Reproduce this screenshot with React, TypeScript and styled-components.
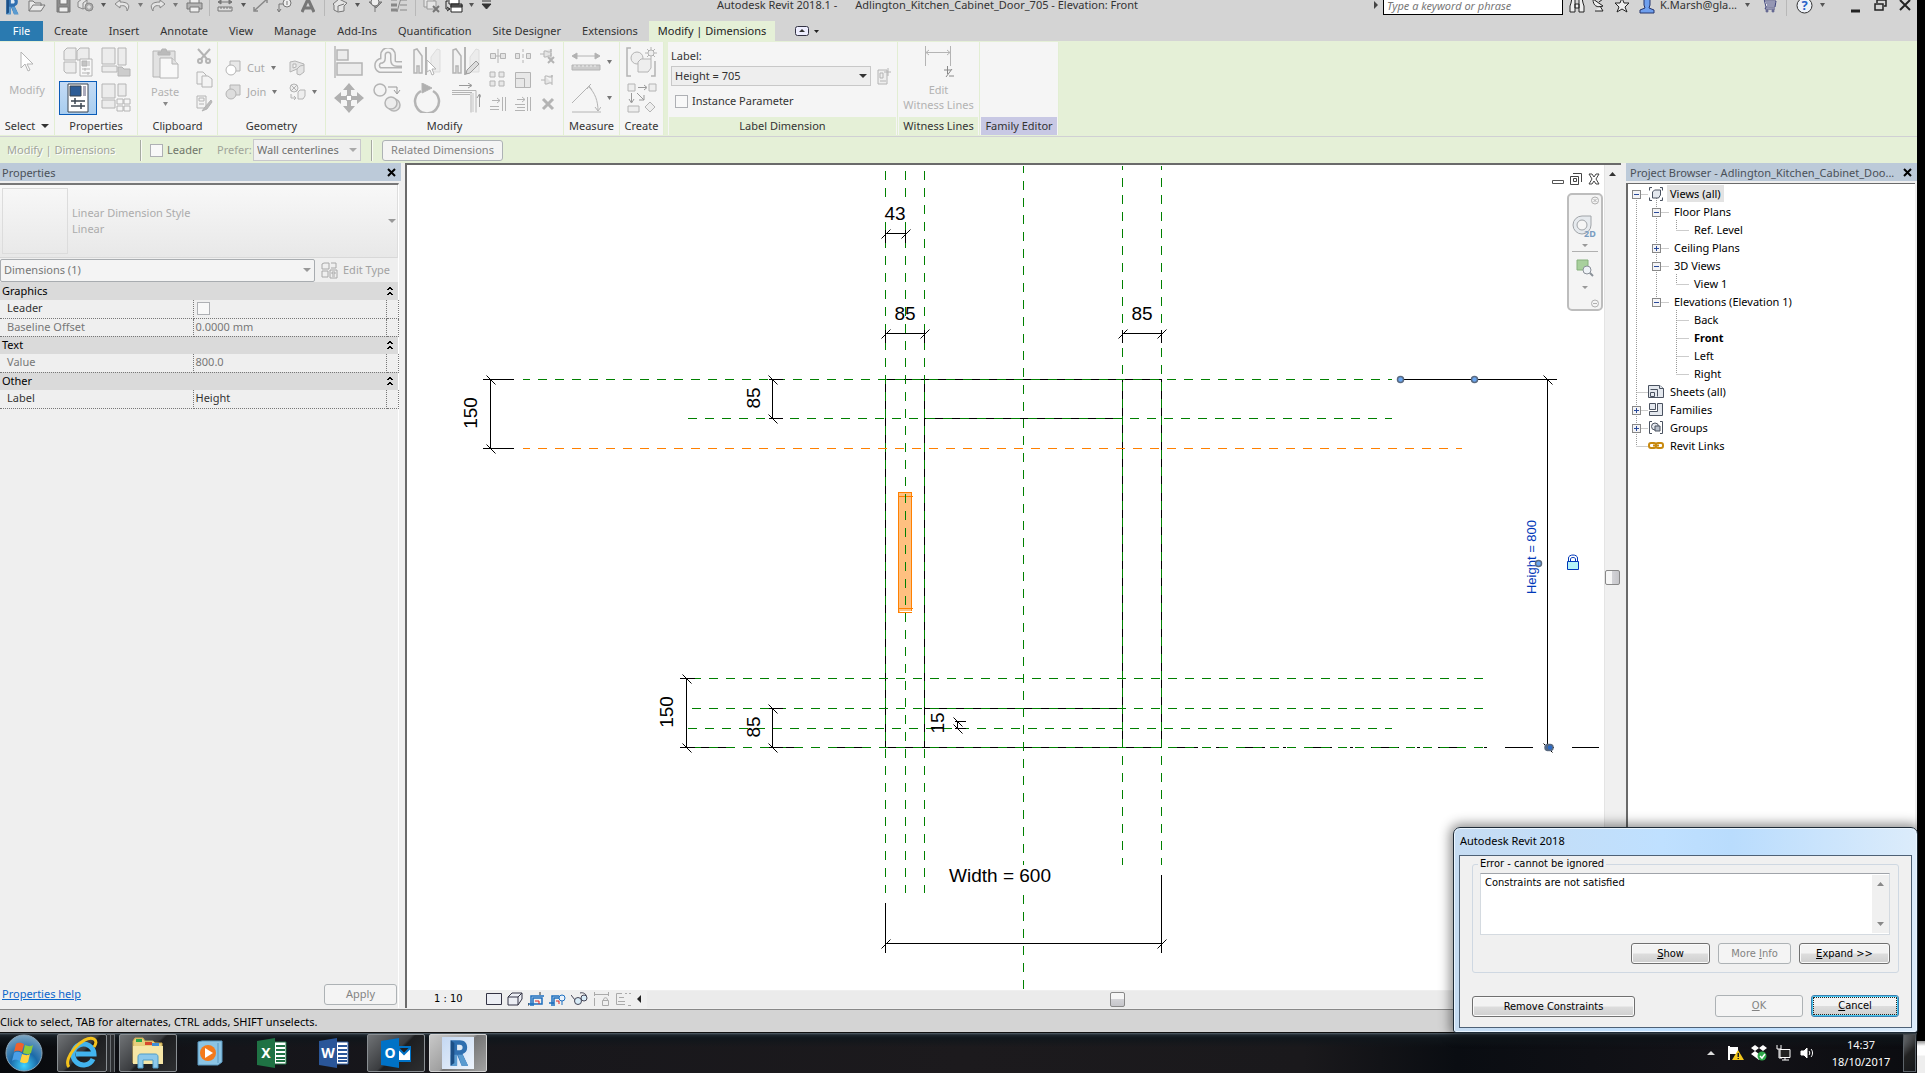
import React from "react";
import styled, { createGlobalStyle, css } from "styled-components";

const UI = `"Noto Sans", "Open Sans", sans-serif`;
const DLG = `"DejaVu Sans Condensed", "Noto Sans", sans-serif`;
const DRAFT = `"Liberation Sans", Arial, sans-serif`;

const Global = createGlobalStyle`
  *, *::before, *::after { box-sizing: border-box; }
  body { margin: 0; background: #000; font: 11px/16px ${UI}; color: #333; overflow: hidden; }
  button, input, select, textarea { font: inherit; color: inherit; margin: 0; }
  button { padding: 0; border: 0; background: none; }
  svg { display: block; flex: none; }
`;

/* ---------- frame ---------- */
const Screen = styled.div`
  display: flex;
  height: 100vh;
  min-height: 700px;
`;
const Desktop = styled.div`
  position: relative;
  flex: 1;
  min-width: 0;
  display: flex;
  flex-direction: column;
  background: #efefef;
`;
const Edge = styled.div`
  width: 8px;
  display: flex;
  flex-direction: column;
  justify-content: flex-end;
  background: #000;
  &::after {
    content: "";
    height: 32px;
    background: linear-gradient(#999, #fff 5px, #fff 14px, #eee 15px);
  }
`;

/* ---------- title bar ---------- */
const TitleBar = styled.header`
  height: 21px;
  overflow: hidden;
  background: #d4d4d4;
`;
const TitleRow = styled.div`
  display: flex;
  align-items: center;
  height: 24px;
  margin-top: -7px;
`;
const Tool = styled.button<{ $w: number }>`
  width: ${(p) => p.$w}px;
  height: 20px;
  display: flex;
  align-items: center;
  justify-content: center;
`;
const Split = styled.span<{ $w: number }>`
  width: ${(p) => p.$w}px;
  height: 22px;
  flex: none;
  background: linear-gradient(#b8b8b8, #b8b8b8) center / 1px 100% no-repeat;
`;
const TitleText = styled.h1`
  flex: 1;
  margin: 0;
  padding-left: 222px;
  display: flex;
  gap: 18px;
  font-size: 11px;
  line-height: 10px;
  font-weight: 400;
  white-space: nowrap;
  color: #333;
`;
const Search = styled.input`
  width: 180px;
  height: 20px;
  margin: 0 2px;
  padding: 0 3px;
  border: 1px solid #000;
  background: #fff;
  border-radius: 0;
  font-size: 11px;
  line-height: 10px;
  font-style: italic;
  &::placeholder { color: #777; opacity: 1; }
`;
const Account = styled.button`
  width: 79px;
  text-align: left;
  padding-left: 2px;
  line-height: 10px;
  white-space: nowrap;
`;
const WindowButtons = styled.div`
  display: flex;
  margin-left: 15px;
`;

/* ---------- ribbon ---------- */
const Tabs = styled.nav`
  height: 20px;
  display: flex;
  gap: 1px;
  background: #d4d4d4;
`;
const Tab = styled.button<{ $kind?: "file" | "active" }>`
  padding: 0 10px;
  height: 20px;
  white-space: nowrap;
  ${(p) => p.$kind === "file" && css`width: 43px; background: #2a7ab0; color: #fff;`}
  ${(p) => p.$kind === "active" && css`background: #e5f0d7; padding: 0 9px; color: #222;`}
`;
const Ribbon = styled.section`
  display: flex;
  height: 96px;
  padding-top: 1px;
  background: #e5f0d7;
  border-bottom: 1px solid #d0d0d4;
`;
const PanelBox = styled.section<{ $w: number; $after?: number }>`
  width: ${(p) => p.$w}px;
  margin-right: ${(p) => p.$after ?? 0}px;
  height: 93px;
  display: flex;
  flex-direction: column;
  background: #f5f5f5;
  border-right: 1px solid #e2eed3;
`;
const PanelBody = styled.div<{ $left?: number }>`
  height: 75px;
  display: flex;
  justify-content: ${(p) => (p.$left ? "flex-start" : "center")};
  padding-left: ${(p) => p.$left ?? 0}px;
  align-items: center;
`;
const PanelTitle = styled.h2<{ $tone?: string }>`
  margin: 0 1px;
  height: 18px;
  line-height: 18px;
  font-size: 11px;
  font-weight: 400;
  text-align: center;
  white-space: nowrap;
  display: flex;
  justify-content: center;
  align-items: center;
  gap: 6px;
  background: ${(p) => p.$tone ?? "transparent"};
`;
const BigTool = styled.button`
  align-self: flex-start;
  display: flex;
  flex-direction: column;
  align-items: center;
  padding-top: 4px;
  line-height: 15px;
  color: #b2b2b2;
  white-space: nowrap;
`;
const BigIcon = styled.span`
  height: 31px;
  margin-bottom: 5px;
  display: flex;
  align-items: center;
`;
const BigLabel = styled.span`
  margin-bottom: 3px;
`;
const Cell = styled.button<{ $on?: boolean; $start?: boolean }>`
  display: flex;
  align-items: center;
  justify-content: ${(p) => (p.$start ? "flex-start" : "center")};
  gap: 6px;
  color: #aaa;
  ${(p) => p.$on && css`background: linear-gradient(#c5dcf5, #a8cdf0); outline: 1px solid #0a5cb8;`}
`;
const CellGrid = styled.div<{ $cols: string; $rows: string; $gap?: string }>`
  display: grid;
  grid-template-columns: ${(p) => p.$cols};
  grid-template-rows: ${(p) => p.$rows};
  gap: ${(p) => p.$gap ?? "0"};
`;
const LabelForm = styled.div`
  flex: 1;
  align-self: stretch;
  display: flex;
  flex-direction: column;
  padding: 6px 0 0 3px;
  gap: 2px;
`;
const Line = styled.div<{ $gap?: number; $top?: number }>`
  display: flex;
  align-items: center;
  gap: ${(p) => p.$gap ?? 4}px;
  margin-top: ${(p) => p.$top ?? 0}px;
`;
const SelectWrap = styled.span<{ $w: number; $h: number; $tone: string; $edge: string; $ink?: string }>`
  position: relative;
  display: inline-block;
  width: ${(p) => p.$w}px;
  height: ${(p) => p.$h}px;
  color: ${(p) => p.$ink ?? "inherit"};
  select {
    appearance: none;
    width: 100%;
    height: 100%;
    padding: 0 3px;
    background: ${(p) => p.$tone};
    border: 1px solid ${(p) => p.$edge};
    border-radius: 0;
  }
  svg { position: absolute; right: 4px; top: 50%; margin-top: -2px; pointer-events: none; }
`;
const Tick = styled.input`
  appearance: none;
  width: 13px;
  height: 13px;
  flex: none;
  border: 1px solid #aeb0b4;
  background: #f8f8f8;
`;

/* ---------- options bar ---------- */
const Options = styled.section`
  height: 26px;
  display: flex;
  align-items: center;
  padding-left: 7px;
  background: #e5f0d7;
  white-space: nowrap;
`;
const Context = styled.span`
  width: 133px;
  color: #a0a49a;
  text-shadow: 1px 1px 0 #fff;
`;
const Rule = styled.span<{ $before?: number; $after: number }>`
  width: 2px;
  height: 21px;
  margin: 0 ${(p) => p.$after}px 0 ${(p) => p.$before ?? 0}px;
  background: #a6aaa2;
  border-right: 1px solid #f8fbf4;
`;
const FieldLabel = styled.label<{ $w: number; $tone: string }>`
  width: ${(p) => p.$w}px;
  color: ${(p) => p.$tone};
`;
const FlatButton = styled.button<{ $w: number; $h: number }>`
  width: ${(p) => p.$w}px;
  height: ${(p) => p.$h}px;
  border: 1px solid #adb2b5;
  border-radius: 3px;
  background: #f4f4f4;
  color: #838383;
`;

/* ---------- work area ---------- */
const Work = styled.main`
  flex: 1;
  min-height: 0;
  display: flex;
  padding-bottom: 1px;
`;
const Side = styled.aside`
  width: 401px;
  margin-right: 4px;
  display: flex;
  flex-direction: column;
`;
const PaneHead = styled.header<{ $left?: number }>`
  height: 18px;
  flex: none;
  display: flex;
  align-items: center;
  justify-content: space-between;
  padding: 1px 5px 0 ${(p) => p.$left ?? 2}px;
  background: #bccad9;
  color: #4a5058;
  white-space: nowrap;
`;
const PaneBody = styled.div`
  flex: 1;
  display: flex;
  flex-direction: column;
  margin: 2px 2px 0 0;
  border-top: 2px solid #777;
  border-right: 1px solid #fff;
`;
const TypeBox = styled.button`
  height: 73px;
  width: 100%;
  display: flex;
  align-items: center;
  padding: 0 1px 0 2px;
  background: linear-gradient(#f8f8f8, #e8e8e8);
  border-bottom: 1px solid #d8d8d8;
  border-right: 1px solid #ddd;
  color: #acacac;
  text-align: left;
`;
const Preview = styled.span`
  width: 66px;
  height: 66px;
  margin-right: 4px;
  border: 1px solid #dcdcdc;
`;
const Grow = styled.span`
  flex: 1;
`;
const FilterRow = styled.div`
  display: flex;
  align-items: center;
  height: 24px;
  gap: 6px;
  color: #777;
  select { border-radius: 2px; }
`;
const EditType = styled.button`
  display: flex;
  align-items: center;
  gap: 5px;
  color: #a2a2a2;
`;
const Props = styled.table`
  width: 398px;
  border-collapse: collapse;
  table-layout: fixed;
  td, th {
    height: 18px;
    padding: 0 0 1px 2px;
    line-height: 16px;
    font-weight: 400;
    text-align: left;
    border: 0;
  }
  input { display: block; margin: 1px 0 0 1px; }
`;
const Group = styled.tr`
  background: #dadada;
  color: #000;
  && td { padding-left: 0; }
`;
const Prop = styled.tr<{ $dim?: boolean }>`
  color: ${(p) => (p.$dim ? "#777" : "#333")};
  && th { padding-left: 7px; }
  && td, && th { border-bottom: 1px dotted #777; border-right: 1px dotted #777; }
`;
const SideFoot = styled.footer`
  margin-top: auto;
  height: 25px;
  display: flex;
  justify-content: space-between;
  align-items: center;
  padding: 0 1px 3px 2px;
  a { color: #0a66cc; }
`;

const View = styled.section`
  flex: 1;
  min-width: 0;
  display: flex;
  flex-direction: column;
  border-top: 2px solid #6a6a6a;
  border-left: 2px solid #6a6a6a;
  margin-right: 5px;
`;
const ViewRow = styled.div`
  flex: 1;
  min-height: 0;
  display: flex;
`;
const Sheet = styled.div`
  position: relative;
  flex: 1;
  min-width: 0;
  overflow: hidden;
  background: #fff;
`;
const WindowTools = styled.div`
  position: absolute;
  right: 4px;
  top: 8px;
  display: flex;
  gap: 6px;
`;
const NavBar = styled.div`
  position: absolute;
  right: 1px;
  top: 28px;
`;
const VScroll = styled.div`
  width: 17px;
  display: flex;
  flex-direction: column;
  align-items: flex-start;
  background: #f0f0f0;
  border-left: 1px solid #e4e4e4;
  padding-top: 7px;
  svg { margin-left: 4px; }
  i { width: 15px; height: 15px; margin-top: 394px; border: 1px solid #888; border-radius: 2px; background: linear-gradient(90deg, #f6f6f6 45%, #d2d2d6 50%, #c6c6ca); }
`;
const ViewBar = styled.div`
  height: 18px;
  flex: none;
  display: flex;
  align-items: center;
  padding-left: 27px;
  font: 11px/16px ${DLG};
  color: #000;
`;
const Scale = styled.button`
  width: 52px;
  text-align: left;
`;
const ViewIcons = styled.div`
  display: flex;
  gap: 5px;
  margin-right: 5px;
`;
const HTrack = styled.div`
  flex: 1;
  height: 17px;
  margin-left: 5px;
  display: flex;
  background: #ebebeb;
  i { width: 15px; height: 15px; margin: 1px 0 0 463px; border: 1px solid #888; border-radius: 2px; background: linear-gradient(#f6f6f6 45%, #d2d2d6 50%, #c6c6ca); }
`;
const Browser = styled.aside`
  width: 291px;
  display: flex;
  flex-direction: column;
`;
const Tree = styled.ul`
  flex: 1;
  list-style: none;
  margin: 2px 2px 0 0;
  padding: 0 0 0 2px;
  border-top: 1px solid #6a6a6a;
  border-left: 2px solid #6a6a6a;
  background: #fff;
  color: #000;
`;
const Node = styled.li<{ $bold?: boolean; $on?: boolean }>`
  height: 18px;
  display: flex;
  align-items: center;
  white-space: nowrap;
  font-weight: ${(p) => (p.$bold ? 700 : 400)};
  span { line-height: 17px; padding: 0 3px; background: ${(p) => (p.$on ? "#e3e3e3" : "none")}; }
`;

const Status = styled.footer`
  height: 24px;
  flex: none;
  border-top: 1px solid #888;
  border-bottom: 1px solid #111;
  background: #d4d4d4;
  line-height: 24px;
  color: #000;
`;

/* ---------- taskbar ---------- */
const Taskbar = styled.nav`
  height: 40px;
  flex: none;
  display: flex;
  align-items: center;
  background: linear-gradient(#56636c 0, #1c242b 2px, #10161b 5px, rgba(18, 18, 22, 0) 14px), linear-gradient(90deg, #07090c, #15151a 12%, #1c1a1d 50%, #1a191c 68%, #0a0d12 76%, #141318 90%, #0b0c10);
`;
const Task = styled.button<{ $w: number; $after: number; $look?: "open" | "front" }>`
  width: ${(p) => p.$w}px;
  height: 38px;
  margin-right: ${(p) => p.$after}px;
  display: flex;
  align-items: center;
  justify-content: center;
  border-radius: 2px;
  ${(p) => p.$look === "open" && css`border: 1px solid #8a8f93; background: linear-gradient(135deg, #707376, #3a3c3f 48%, #1d1e20 52%, #2d2e30);`}
  ${(p) => p.$look === "front" && css`border: 1px solid #d4d4d4; background: linear-gradient(135deg, #c8c8c8, #a0a0a0 48%, #747474 52%, #a2a2a2);`}
`;
const Stack = styled.span`
  width: 4px;
  height: 38px;
  border-right: 1px solid #6a6e72;
  border-top: 1px solid #6a6e72;
  background: #2b2d30;
  & + button { margin-left: 4px; }
`;
const Tray = styled.div`
  margin-left: auto;
  margin-right: 1px;
  display: flex;
  align-items: center;
`;
const TrayCell = styled.button`
  width: 24px;
  display: flex;
  justify-content: center;
`;
const Clock = styled.time`
  width: 84px;
  text-align: center;
  line-height: 17px;
  color: #fff;
`;
const Peek = styled.button`
  width: 13px;
  height: 38px;
  border: 1px solid #5d646a;
  background: linear-gradient(135deg, #7b8085, #222 50%, #15171a);
`;

/* ---------- dialog ---------- */
const Dialog = styled.section`
  position: absolute;
  right: -1px;
  bottom: 40px;
  width: 465px;
  height: 206px;
  padding: 0 5px 4px;
  display: flex;
  flex-direction: column;
  border: 1px solid #1d2a36;
  border-radius: 7px 7px 3px 3px;
  background: linear-gradient(90deg, #c6dcf2, #bfe0ff 45%, #b9dcfd 60%, #dcecfb);
  box-shadow: inset 0 0 0 1px #eaf5ff, 0 0 12px 3px rgba(0, 0, 0, 0.45);
  color: #000;
`;
const DialogTitle = styled.h2`
  height: 27px;
  margin: 0 1px;
  font-size: 11px;
  font-weight: 400;
  line-height: 25px;
`;
const DialogBody = styled.div`
  flex: 1;
  padding: 1px 12px 10px;
  display: flex;
  flex-direction: column;
  justify-content: space-between;
  border: 1px solid #4e6176;
  background: #f0f0f0;
  font: 11px/14px ${DLG};
`;
const Box = styled.fieldset`
  margin: 0;
  padding: 2px 8px 8px 7px;
  border: 1px solid #cfd8e2;
  border-radius: 3px;
  legend { padding: 0 2px; margin-left: -2px; line-height: 14px; }
`;
const MessageRow = styled.div`
  display: flex;
  height: 62px;
  border: 1px solid #d4dae0;
  border-top-color: #a0a4aa;
  background: #fff;
  textarea { flex: 1; border: 0; outline: 0; resize: none; padding: 2px 4px; background: none; overflow: hidden; }
`;
const MessageScroll = styled.div`
  width: 17px;
  margin: 1px 0;
  display: flex;
  flex-direction: column;
  justify-content: space-between;
  align-items: center;
  padding: 7px 0;
  background: #f0f0f0;
`;
const Buttons = styled.div<{ $top?: number }>`
  display: flex;
  align-items: flex-end;
  justify-content: flex-end;
  gap: 8px;
  margin-top: ${(p) => p.$top ?? 0}px;
`;
const Push = styled.button<{ $w: number; $tall?: boolean; $focus?: boolean }>`
  width: ${(p) => p.$w}px;
  height: ${(p) => (p.$tall ? 22 : 21)}px;
  border: 1px solid #707070;
  border-radius: 3px;
  background: linear-gradient(#f3f3f3 48%, #dddddd 52%, #cfcfcf);
  box-shadow: inset 0 0 0 1px #fafafa;
  &:disabled { border-color: #adb2b5; background: #f4f4f4; color: #838383; box-shadow: none; }
  ${(p) => p.$focus && css`border-color: #3c7fb1; box-shadow: inset 0 0 0 1px #46c8f0; outline: 1px dotted #222; outline-offset: -3px;`}
`;

/* ---------- icons ---------- */
type IcProps = { w: number; h: number; s?: string; f?: string; sw?: number; children: React.ReactNode };
const Ic = ({ w, h, s = "#b4b4b4", f = "none", sw = 1, children }: IcProps) => (
  <svg width={w} height={h} viewBox={`0 0 ${w} ${h}`} stroke={s} fill={f} strokeWidth={sw} aria-hidden="true">{children}</svg>
);
const Caret = ({ c = "#555", w = 5, up }: { c?: string; w?: number; up?: boolean }) => (
  <svg width={w} height={4} viewBox="0 0 8 4" preserveAspectRatio="none" fill={c} aria-hidden="true">
    <path d={up ? "M0 4h8L4 0z" : "M0 0h8L4 4z"} />
  </svg>
);
const Close = ({ c = "#000" }: { c?: string }) => (
  <Ic w={9} h={9} s={c} sw={2}><path d="M1 1l7 7M8 1L1 8" /></Ic>
);
const RLogo = ({ w, h }: { w: number; h: number }) => (
  <svg width={w} height={h} viewBox="0 0 24 30" aria-hidden="true">
    <path d="M4 1h10c5 0 8 3 8 8 0 4-2 6-5 7l6 13h-7l-5-12v12H4z" fill="#2f6fb0" />
    <path d="M4 17l7 0v12H4zM12 17h5l6 12h-7z" fill="#5a9bd0" />
    <path d="M11 6h3c2 0 3 1 3 3s-1 3-3 3h-3z" fill="#dfe9f4" />
    <path d="M4 1l4 3v22l-4 3z" fill="#1c4f86" />
  </svg>
);

const Folder = <Ic w={18} h={14} s="#777"><path d="M1 13V3h4l2 2h6v3M1 13l4-6h12l-4 6z" fill="#e8e8e8" /></Ic>;
const Save = <Ic w={15} h={15} s="#777" f="#8c8c8c"><path d="M1 1h12l1 1v12H1z" /><path d="M4 1h7v5H4zM3 9h9v5H3z" fill="#eee" /></Ic>;
const Sync = <Ic w={17} h={16} s="#888" f="#e2e2e2"><path d="M1 5l4-3 5 1v7l-4 2-5-2zM6 6v6M6 6l4-3" /><circle cx="12" cy="10" r="4" fill="#aaa" /><path d="M10 10h4M12 8v4" stroke="#eee" /></Ic>;
const Undo = <Ic w={17} h={13} s="#888"><path d="M6 1L1 5l5 4V7c4-1 7 0 7 5 4-6 1-9-7-9z" fill="#e4e4e4" /></Ic>;
const Redo = <Ic w={17} h={13} s="#888"><path d="M11 1l5 4-5 4V7c-4-1-7 0-7 5-4-6-1-9 7-9z" fill="#e4e4e4" /></Ic>;
const Print = <Ic w={17} h={16} s="#777" f="#eee"><path d="M4 6V1h9v5" /><path d="M1 6h15v6H1z" fill="#b4b4b4" /><path d="M4 10h9v5H4z" /></Ic>;
const MeasureS = <Ic w={16} h={13} s="#777"><path d="M1 3h14M1 3l3-2v4zM15 3l-3-2v4z" fill="#777" /><path d="M1 8h14v4H1zM4 8v2M7 8v2M10 8v2M13 8v2" fill="#ddd" /></Ic>;
const DimS = <Ic w={15} h={14} s="#888"><path d="M2 12L13 2M1 9v4h4M10 1h4v4" strokeWidth="1.5" /></Ic>;
const TagS = <Ic w={15} h={15} s="#777"><circle cx="10" cy="5" r="4" fill="#eee" /><path d="M10 3v4M6 6H2v7M0 11l2 3 2-3" /></Ic>;
const TextA = <Ic w={14} h={15} s="#777" sw={3}><path d="M1 14L7 1l6 13M4 10h7" /></Ic>;
const Home = <Ic w={16} h={15} s="#777" f="#e4e4e4"><path d="M1 6l6-5 8 4-3 3v5l-6 1-4-2V7z" /><path d="M6 14V8l6-2" /></Ic>;
const Section = <Ic w={15} h={16} s="#777"><path d="M1 5h13L8 11z" fill="#999" /><circle cx="7" cy="5" r="4" fill="#eee" /><path d="M7 9v6" /></Ic>;
const Thin = <Ic w={16} h={14} s="#888"><path d="M0 2h6M9 2h7M0 7h6M9 7h7M0 12h6M9 12h7M10 0L6 14" /><path d="M0 7h6M0 12h6" strokeWidth="3" /></Ic>;
const Hidden = <Ic w={17} h={16} s="#999" f="#e4e4e4"><path d="M1 1h10v9H1z" /><path d="M4 4h9v8H4z" /><path d="M10 9l6 6M16 9l-6 6" strokeWidth="2" stroke="#777" /></Ic>;
const Switch = <Ic w={18} h={16} s="#222" f="#fff"><path d="M4 1h10v6H4zM6 7h11v8H6z" /><path d="M6 8h11v2H6z" fill="#777" /><path d="M3 4H1v8h3M2 10l3 2-3 2" fill="none" /></Ic>;
const Custom = <Ic w={11} h={10} s="#333" f="#333"><path d="M1 1h9" /><path d="M1 4h9L5.5 9z" /></Ic>;
const Bino = <Ic w={16} h={16} s="#222" f="#eee"><path d="M2 6l1-5h3v14H1V9zM14 6l-1-5h-3v14h5V9zM6 7h4v4H6z" /></Ic>;
const Dish = <Ic w={16} h={16} s="#222" f="#eee"><path d="M3 2c0 7 4 9 10 7zM5 14h8l-3-5M9 5l4-3" /></Ic>;
const Star = <Ic w={16} h={16} s="#222" f="#eee"><path d="M8 1l2 5h5l-4 4 2 5-5-3-5 3 2-5-4-4h5z" /></Ic>;
const User = <Ic w={16} h={17} s="#24346c" f="#6f9fee"><path d="M5 1h6v7l-1 3 5 2v3H1v-3l5-2-1-3z" /></Ic>;
const Cart = <Ic w={16} h={16} s="#3a3f78" f="#eee"><path d="M0 2h3l2 8h9l1-6H4M5 10l-1 2h10" /><path d="M5 6h9M6 8h8" /><circle cx="6" cy="14" r="1" /><circle cx="12" cy="14" r="1" /></Ic>;
const HelpI = (
  <svg width="17" height="17" viewBox="0 0 17 17" aria-hidden="true">
    <circle cx="8.5" cy="8.5" r="7.5" fill="#eef2f8" stroke="#333" />
    <text x="8.5" y="13" textAnchor="middle" fontFamily={UI} fontWeight="700" fontSize="13" fill="#2a62c8">?</text>
  </svg>
);

const Cursor = <Ic w={14} h={22}><path d="M1 1v16l4-4 3 7 2-1-3-6h6z" fill="#fff" /></Ic>;
const TypeProps = <Ic w={30} h={30} f="#ececec"><path d="M1 4l3-3h9v12H1zM14 4l3-3h9v12H14zM1 15h12v11H3l-2-2z" /><path d="M17 12h12v17H17z" fill="#f8f8f8" /><path d="M19 14h5v5h-5z" fill="#c4c4c4" /><path d="M19 22h8M19 26h8M22 21v3M25 25v3M26 14v5" /></Ic>;
const FamCat = <Ic w={30} h={30} f="#ececec"><path d="M1 1h13v16H1zM1 19h15v6H1zM17 1h8v17h-8z" /><path d="M17 20h4l2 2h6v7H17z" fill="#ccc" /></Ic>;
const PropsOn = <Ic w={22} h={30} s="#3a4450" f="#fff"><path d="M1 1h20v28H1z" /><path d="M3 3h11v10H3z" fill="#2d5c96" /><path d="M16 3h3v10h-3z" fill="#aab" stroke="none" /><path d="M4 18h14M4 23h14M8 15v6M14 20v6" strokeWidth="1.5" /></Ic>;
const FamTypes = <Ic w={30} h={29} f="#ececec"><path d="M1 1h13v14H1zM1 17h13v8H1zM17 1h8v12h-8z" /><path d="M16 16h6v5h-6zM23 16h6v5h-6zM16 23h6v5h-6zM23 23h6v5h-6z" fill="#f6f6f6" /></Ic>;
const Paste = <Ic w={27} h={31} f="#e2e2e2"><path d="M1 3h22v26H1z" /><path d="M6 4h3l1-3h4l1 3h3v3H6z" fill="#bbb" /><path d="M8 10h12l6 6v14H8z" fill="#f8f8f8" /><path d="M20 10v6h6" /></Ic>;
const Scissors = <Ic w={16} h={16} sw={2}><path d="M2 1l9 10M14 1L5 11" /><circle cx="4" cy="13" r="2" /><circle cx="12" cy="13" r="2" /></Ic>;
const CopyS = <Ic w={17} h={17} f="#f4f4f4"><path d="M1 1h6l3 3v9H1z" /><path d="M6 5h6l4 3v8H6z" /></Ic>;
const Match = <Ic w={17} h={17} f="#f4f4f4"><path d="M1 1h9v12H1zM3 3h5v3H3zM3 9h5" /><path d="M15 5l-6 7-3 4 5-2 5-7z" fill="#bbb" /></Ic>;
const CutG = <Ic w={16} h={16} f="#e8e8e8"><path d="M5 1h10v10H5z" /><circle cx="6" cy="10" r="5" fill="#fff" /></Ic>;
const JoinG = <Ic w={16} h={16} f="#ddd"><path d="M5 1h10v10H5z" /><circle cx="6" cy="10" r="5" /></Ic>;
const Cope = <Ic w={16} h={16} f="#e4e4e4"><path d="M1 2l5-1 9 3v8l-4 3-3-1V9L1 12zM8 9l3-3 4-1M4 4v4l3-1V4z" /></Ic>;
const Wall = <Ic w={17} h={17} f="#eee"><circle cx="5" cy="5" r="4" /><path d="M2 2l6 6M8 2L2 8M2 11v4h5M5 13l2 2-2 2M9 9l2-2h5v6l-2 3H9z" /></Ic>;
const AlignI = <Ic w={30} h={32}><path d="M1 0v32" stroke="#999" /><path d="M3 4h11v10H3zM3 17h25v12H3z" fill="#ececec" strokeWidth="1.5" /></Ic>;
const offsetPath = "M29 22H7a5 5 0 0 1 0-9c3 0 3-1 3-3V7a5 5 0 0 1 10 0v5c0 3 1 4 4 4h5";
const OffsetI = <Ic w={30} h={27}><path d={offsetPath} strokeWidth="6" /><path d={offsetPath} stroke="#f5f5f5" strokeWidth="3" /></Ic>;
const MirrorI = <Ic w={28} h={29}><path d="M1 3l3-1 5 7v17H6v-7H4v7H1z" fill="#f2f2f2" strokeWidth="1.5" /><path d="M13 0v28" strokeWidth="2" /><path d="M27 3l-3-1-6 8v15h9z" fill="#ececec" stroke="#ddd" /><path d="M14 13v12l3-2 2 5 2-1-2-5h4z" fill="#fff" /></Ic>;
const MirrorD = <Ic w={28} h={29}><path d="M1 3l3-1 5 7v17H6v-7H4v7H1z" fill="#f2f2f2" strokeWidth="1.5" /><path d="M13 0v28" strokeWidth="2" /><path d="M27 3l-3-1-6 8v15h9z" fill="#ececec" stroke="#ddd" /><path d="M14 27l1-4 9-9 3 3-9 9z" fill="#ddd" stroke="#999" /></Ic>;
const MoveI = <Ic w={30} h={30} f="#b0b0b0" s="none"><path d="M15 0l6 7h-4v5h-4V7H9zM15 30l6-7h-4v-5h-4v5H9zM0 15l7-6v4h5v4H7v4zM30 15l-7-6v4h-5v4h5v4z" /><path d="M12.500 12.500h5v5h-5z" fill="#fff" stroke="#b0b0b0" /></Ic>;
const CopyI = <Ic w={29} h={29} f="#f4f4f4" sw={1.5}><circle cx="7" cy="7" r="6" /><circle cx="21" cy="22" r="6" fill="#e4e4e4" /><circle cx="18" cy="20" r="6" fill="#ececec" /><path d="M15 4h9v6M21 7l3 4 3-4" fill="none" stroke="#999" strokeWidth="1" /></Ic>;
const RotateI = <Ic w={28} h={30}><path d="M20 8a12 12 0 1 1-12 0" strokeWidth="2.5" /><path d="M9 0l10 5-10 5z" fill="#b0b0b0" /></Ic>;
const TrimI = <Ic w={30} h={30}><path d="M1 7.500h24v22M1 11.500h19v18M1 9.500h20" /><path d="M19 10h4v19h-2V12h-2z" fill="#ddd" stroke="none" /><path d="M8 2.500h12M17 0l4 2.500-4 2.500M28.500 24V12M26 15l2.500-4 2 4" stroke="#999" /></Ic>;
const SplitI = <Ic w={16} h={14} f="#e4e4e4"><path d="M.5 4.500h5v5h-5zM10.500 4.500h5v5h-5zM8 0v14M5 7h6" /></Ic>;
const GapI = <Ic w={16} h={14} f="#e4e4e4"><path d="M.5 4.500h4v5h-4zM11.500 4.500h4v5h-4zM8 0v3M8 5v4M8 11v3" /></Ic>;
const PinX = <Ic w={16} h={16} f="#e4e4e4"><path d="M0 6h4M4 3h2l2 1h3V1M4 3v6h2l2-1h3V5M11 1v10" /><path d="M8 9l6 6M14 9l-6 6" strokeWidth="2" /></Ic>;
const Array4 = <Ic w={17} h={17} f="#e8e8e8"><path d="M1 1h5v5H1zM10 1h5v5h-5zM1 10h5v5H1zM10 10h5v5h-5z" /></Ic>;
const ScaleI = <Ic w={16} h={16} f="#e8e8e8"><path d="M.5 .5h15v15H.5zM.5 6.500h9v9h-9z" /></Ic>;
const PinI = <Ic w={14} h={12} f="#e4e4e4"><path d="M0 6h4M4 2h2l2 1h3V1M4 2v8h2l2-1h3M11 1v10" /></Ic>;
const ExtendI = <Ic w={16} h={16}><path d="M2 4.500h8M7 2l3 2.500-3 2.500M0 10.500h9M0 13.500h9M12.500 1v14M15.500 1v14" /></Ic>;
const ExtendM = <Ic w={16} h={16}><path d="M2 3.500h8M7 1l3 2.500-3 2.500M0 8.500h10M2 11.500h8M0 14.500h10M12.500 1v14M15.500 1v14" /></Ic>;
const DeleteI = <Ic w={14} h={14} sw={3}><path d="M2 2l10 10M12 2L2 12" /></Ic>;
const MeasureI = <Ic w={30} h={20}><path d="M2 4h26M6 1L1 4l5 3zM24 1l5 3-5 3z" fill="#b0b0b0" /><path d="M1 13h28v5H1z" fill="#ccc" /><path d="M4 13v2M8 13v2M12 13v2M16 13v2M20 13v2M24 13v2" stroke="#eee" /></Ic>;
const AngleI = <Ic w={30} h={30}><path d="M1 20L20 1M1 29h29M18 4c6 6 9 14 9 24M16 6l2-3 3 4M24 24l3 4 3-4" /></Ic>;
const CreateG = <Ic w={32} h={30} f="#eee"><path d="M5 1H1v28h4M25 29h4V14" fill="none" strokeWidth="1.5" /><circle cx="11" cy="11" r="6" /><path d="M12 15l3-3h10v9l-3 4H12z" /><circle cx="25" cy="6" r="3" /><path d="M25 0v3M25 9v3M19 6h3M28 6h3M21 2l2 2M29 2l-2 2M21 10l2-2M29 10l-2-2" /></Ic>;
const CreateS = <Ic w={30} h={30} f="#eee"><path d="M1 1h7v7H1zM22 1h7v7h-7zM1 23h11v6H1zM23 19l5 5-5 5-5-5z" /><path d="M11 4.500h8M17 2l3 2.500-3 2.500M4.500 10v9M2 16l2.500 4 2.500-4M10 10l7 7M17 12v5h-5" stroke="#999" fill="none" /></Ic>;
const FamParam = <Ic w={14} h={17} f="#eee"><path d="M1 2h9v14H1zM3 5h3v5H3zM3 13h6" /><path d="M11 0v8M7 4h7" /></Ic>;
const Witness = <Ic w={30} h={32}><path d="M1.500 0v20M26.500 0v20M1 6.500h26M5 4L2 6.500 5 9M23 4l3 2.500L23 9" /><path d="M20 24h7M23.500 20v8M25 30h5M22 31l6-8" stroke="#888" /></Ic>;
const EditTypeI = <Ic w={17} h={17} s="#a8a8a8"><path d="M1 2l2-1h5v6H1zM10 1h5v5h-5M1 9h6v6H1zM9 8h7v8H9zM11 10h3v2h-3zM11 14h3" /></Ic>;
const Fold = <Ic w={8} h={10} s="#000"><path d="M1 4l3-3 3 3M1 9l3-3 3 3M2 4l2-2 2 2M2 9l2-2 2 2" /></Ic>;

/* ---------- elevation drawing ---------- */
const green = "#008000";
type Plane = { at: number; from: number; to: number; dash: number; tone?: string };
const verticals: Plane[] = [
  { at: 885, from: 165, to: 892, dash: 170 },
  { at: 905, from: 165, to: 892, dash: 170 },
  { at: 924, from: 165, to: 892, dash: 170 },
  { at: 1023, from: 165, to: 989, dash: 163 },
  { at: 1122, from: 165, to: 864, dash: 160 },
  { at: 1161, from: 165, to: 864, dash: 160 },
];
const horizontals: Plane[] = [
  { at: 379, from: 522, to: 1391, dash: 520 },
  { at: 418, from: 687, to: 1391, dash: 687 },
  { at: 448, from: 522, to: 1461, dash: 520, tone: "#ff8000" },
  { at: 678, from: 694, to: 1485, dash: 691 },
  { at: 708, from: 687, to: 1485, dash: 691 },
  { at: 728, from: 687, to: 1391, dash: 687 },
  { at: 747, from: 687, to: 1485, dash: 691 },
];
const Slash = ({ x, y, back }: { x: number; y: number; back?: boolean }) => (
  <path d={back ? `M${x - 4} ${y - 4}l9 9` : `M${x - 4} ${y + 5}l9 -9`} />
);
const Note = ({ x, y, turn, size = 19, tone = "#000", children }: { x: number; y: number; turn?: boolean; size?: number; tone?: string; children: string }) => (
  <text x={x} y={y} transform={turn ? `rotate(-90 ${x} ${y})` : undefined} textAnchor="middle" fontFamily={DRAFT} fontSize={size} fill={tone} stroke="none">{children}</text>
);
const Drawing = () => (
  <svg width="1197" height="825" viewBox="407 165 1197 825" role="img" aria-label="Front elevation of the cabinet door">
    <g stroke="#000" fill="none" shapeRendering="crispEdges" transform="translate(0.5 0.5)">
      <path d="M885 379h276v368H885zM924 379v368M1122 379v368M924 418h198M924 708h198" />
      <path d="M678 747H1598" strokeDasharray="28 18 3 18" strokeDashoffset={45} />
      <rect x="898" y="492" width="13" height="120" fill="#ffc080" stroke="#ff8000" />
      <path d="M898 496h14M898 608h14" stroke="#ff8000" />
      <path d="M899 611h12" stroke="#fff" />
      {verticals.map((p) => (
        <line key={p.at} x1={p.at} x2={p.at} y1={p.from} y2={p.to} stroke={green} strokeDasharray="9 8" strokeDashoffset={p.from - p.dash + 34} />
      ))}
      {horizontals.map((p) => (
        <line key={p.at} y1={p.at} y2={p.at} x1={p.from} x2={p.to} stroke={p.tone ?? green} strokeDasharray="9 8" strokeDashoffset={p.from - p.dash} />
      ))}
      <path d="M885 233h20M885 229v13M905 229v13M885 333h39M885 329v13M924 329v13M1122 333h39M1122 329v13M1161 329v13" />
      <path d="M490 379v69M482 379h31M482 448h31M772 379v39M768 379h14M768 418h14M686 678v69M679 678h15M679 747h15M772 708v39M768 708h14M768 747h14M957 721v7M954 721h11M954 728h11" />
      <path d="M885 943h276M885 902v50M1161 874v78M1547 379v368M1400 379h156" />
    </g>
    <g fill="#fff">
      <path d="M882 202h25v20h-25zM1018 865h12v29h-12z" />
    </g>
    <g stroke="#000" transform="translate(0.5 0.5)">
      <Slash x={885} y={233} /><Slash x={905} y={233} /><Slash x={885} y={333} /><Slash x={924} y={333} />
      <Slash x={1122} y={333} /><Slash x={1161} y={333} /><Slash x={885} y={943} /><Slash x={1161} y={943} />
      <Slash back x={490} y={379} /><Slash back x={490} y={448} /><Slash back x={772} y={379} /><Slash back x={772} y={418} />
      <Slash back x={686} y={678} /><Slash back x={686} y={747} /><Slash back x={772} y={708} /><Slash back x={772} y={747} />
      <Slash back x={957} y={721} /><Slash back x={957} y={728} /><Slash back x={1547} y={379} /><Slash back x={1547} y={747} />
    </g>
    <Note x={895} y={220}>43</Note>
    <Note x={905} y={320}>85</Note>
    <Note x={1142} y={320}>85</Note>
    <Note x={477} y={413} turn>150</Note>
    <Note x={760} y={398} turn>85</Note>
    <Note x={673} y={712} turn>150</Note>
    <Note x={760} y={727} turn>85</Note>
    <Note x={944} y={723} turn>15</Note>
    <Note x={1000} y={882}>Width = 600</Note>
    <Note x={1536} y={557} turn size={13} tone="#0038b8">Height = 800</Note>
    <g fill="#6aa6f0" stroke="#5a6a80" strokeWidth="1.5">
      <circle cx="1400.5" cy="379.5" r="3" /><circle cx="1474.5" cy="379.5" r="3" /><circle cx="1538.5" cy="563.5" r="3" />
      <circle cx="1548" cy="747.5" r="3" fill="#2d6cc8" /><circle cx="1550" cy="747.5" r="3" fill="#2d6cc8" />
    </g>
    <g stroke="#0038b8" fill="none">
      <path d="M1567.5 561.5h11v8h-11z" fill="#b4f4f8" />
      <path d="M1568.5 561v-3c0-4 9-4 9 0v3M1570.5 561v-2c0-2 5-2 5 0v2" />
    </g>
  </svg>
);
const Navigator = () => (
  <svg width="36" height="118" viewBox="0 0 36 118" aria-hidden="true">
    <rect x="1" y="1" width="34" height="116" rx="4" fill="#f4f4f4" stroke="#bdbdbd" strokeWidth="2" />
    <g fill="none" stroke="#b0b0b0">
      <circle cx="28" cy="7.5" r="3.5" /><path d="M26.5 6l3 3M29.5 6l-3 3" />
      <circle cx="28" cy="110.5" r="3.5" /><path d="M26 110.5h4" />
      <path d="M5 58.5h26" />
      <path d="M15 23h9v9a9 9 0 1 1-9-9z" fill="#e6eaee" stroke="#a0a4a8" /><circle cx="15" cy="32" r="5" fill="#f6f6f6" stroke="#a0a4a8" />
      <path d="M10 67h11v10H10z" fill="#a8d09c" stroke="#86b07c" /><circle cx="20" cy="77" r="4" fill="#eef2f6" stroke="#8a9098" /><path d="M23 80l3 3" stroke="#8a9098" strokeWidth="2" />
    </g>
    <path d="M15 51h6l-3 3zM15 93h6l-3 3z" fill="#999" />
    <text x="17" y="44" fontFamily={UI} fontSize="9" fontWeight="700" fill="#7a9cc0">2D</text>
  </svg>
);

/* ---------- project browser ---------- */
type Item = { text: string; level: 0 | 1 | 2; box?: "+" | "-"; icon?: string; bold?: boolean; on?: boolean; up: number[]; down: number[] };
const items: Item[] = [
  { text: "Views (all)", level: 0, box: "-", icon: "views", on: true, up: [], down: [8, 28] },
  { text: "Floor Plans", level: 1, box: "-", up: [8, 28], down: [8, 28, 48] },
  { text: "Ref. Level", level: 2, up: [8, 28, 48], down: [8, 28] },
  { text: "Ceiling Plans", level: 1, box: "+", up: [8, 28], down: [8, 28] },
  { text: "3D Views", level: 1, box: "-", up: [8, 28], down: [8, 28, 48] },
  { text: "View 1", level: 2, up: [8, 28, 48], down: [8, 28] },
  { text: "Elevations (Elevation 1)", level: 1, box: "-", up: [8, 28], down: [8, 48] },
  { text: "Back", level: 2, up: [8, 48], down: [8, 48] },
  { text: "Front", level: 2, bold: true, up: [8, 48], down: [8, 48] },
  { text: "Left", level: 2, up: [8, 48], down: [8, 48] },
  { text: "Right", level: 2, up: [8, 48], down: [8] },
  { text: "Sheets (all)", level: 0, icon: "sheets", up: [8], down: [8] },
  { text: "Families", level: 0, box: "+", icon: "families", up: [8], down: [8] },
  { text: "Groups", level: 0, box: "+", icon: "groups", up: [8], down: [8] },
  { text: "Revit Links", level: 0, icon: "links", up: [8], down: [] },
];
const Branch = ({ it }: { it: Item }) => {
  const w = [37, 41, 61][it.level];
  const cx = 6.5 + it.level * 20;
  return (
    <svg width={w} height="18" viewBox={`0 0 ${w} 18`} aria-hidden="true">
      <g stroke="#999" strokeDasharray="1 1" fill="none">
        {it.up.map((x) => <path key={`u${x}`} d={`M${x - 1.5} 0v10`} />)}
        {it.down.map((x) => <path key={`d${x}`} d={`M${x - 1.5} 10v8`} />)}
        <path d={`M${cx} 10.5H${it.level ? w - 2 : 18}`} />
      </g>
      {it.box && (
        <g transform={`translate(${cx - 4.5} 6)`}>
          <rect x="0.5" y="0.5" width="8" height="8" fill="#f4f4f6" stroke="#888" />
          <path d={it.box === "+" ? "M2 4.5h5M4.5 2v5" : "M2 4.5h5"} stroke="#2a4a9a" />
        </g>
      )}
      <g stroke="#4a5260" fill="#e4e8ee">
        {it.icon === "views" && <path d="M22 3.500h-2.500v3M30 3.500h2.500v3M22 16.500h-2.500v-3M30 16.500h2.500v-3M22.500 8l2-2h6v5l-2 3h-6z" />}
        {it.icon === "sheets" && <><path d="M18.5 3.5h11l4 3v9h-15z" /><path d="M20.5 7.5h7v7M20.5 10.5h4v4h-4zM29.5 3.5v3h4" /></>}
        {it.icon === "families" && <path d="M19.5 3.5h6v6h-6zM27.5 3.5h5v12h-13v-4h8z" />}
        {it.icon === "groups" && <><path d="M22 3.5h-2.5v12H22M30 3.5h2.5v12H30" fill="none" /><circle cx="25" cy="8.5" r="3.5" /><path d="M25 8h5v5h-5z" fill="#b8c0cc" /></>}
        {it.icon === "links" && <g stroke="#c88a10" strokeWidth="2" fill="#fff"><rect x="19" y="7" width="7" height="5" rx="2" /><rect x="26" y="7" width="7" height="5" rx="2" /><path d="M23 9.5h6" /></g>}
      </g>
    </svg>
  );
};

/* ---------- view control icons ---------- */
const viewIcons = [
  <Ic key="detail" w={16} h={14} s="#334" f="#eceef4"><path d="M.5 1.5h15v11H.5z" /></Ic>,
  <Ic key="style" w={16} h={14} s="#334" f="#eceef4"><path d="M1 5l4-4h10v6l-4 6H1zM1 5h10v8M11 5l4-4" /></Ic>,
  <Ic key="crop" w={16} h={14} s="#1d6fc0"><path d="M3 14V4h13M5 14V6h9v6H0" strokeWidth="1.5" /><path d="M12 0v3M0 11v3" stroke="#333" /><path d="M7 9h4v3" stroke="#d22" /></Ic>,
  <Ic key="region" w={17} h={14} s="#1d6fc0"><path d="M3 14V4h7M5 14V6h5M0 11h5" strokeWidth="1.5" /><path d="M7 9h3v3" stroke="#d22" /><circle cx="13" cy="6" r="3" fill="#e8f2fc" /><path d="M13 9v4" /></Ic>,
  <Ic key="hide" w={17} h={14} s="#445" f="#d8ecf8"><path d="M0 3l4 5M9 1c3-1 7 1 6 4" fill="none" /><circle cx="7" cy="9" r="3.5" /><circle cx="13" cy="6" r="3" /></Ic>,
  <Ic key="reveal" w={17} h={14} s="#aaa"><path d="M1.5 0v4M15.5 0v4M1 2.5h14M1.5 6v8M9.5 8.5h6v5h-6zM10.5 8c0-3 4-3 4 0" /></Ic>,
  <Ic key="constraints" w={17} h={14} s="#aaa"><path d="M7 1.5H1.5v11H10M4 5.5h5M3 9.5h7M10 1.5h2M14 1.5h2M13 13.5h3" /></Ic>,
];

/* ---------- app icons ---------- */
const Orb = () => (
  <svg width="40" height="38" viewBox="0 0 40 38" aria-hidden="true">
    <defs><radialGradient id="orb" cx="50%" cy="85%" r="85%"><stop offset="0" stopColor="#3fd2ff" /><stop offset=".45" stopColor="#1b6aa8" /><stop offset="1" stopColor="#7da6c2" /></radialGradient></defs>
    <circle cx="20" cy="19" r="18" fill="url(#orb)" stroke="#8ca6b8" />
    <path d="M12 10c3-2 5-1 8 0l-2 8c-3-1-5-2-8 0z" fill="#f0612c" /><path d="M21 11c3 1 5 2 8 0l-2 8c-3 2-5 1-8 0z" fill="#8ccb3a" />
    <path d="M10 19c3-2 5-1 8 0l-2 8c-3-1-5-2-8 0z" fill="#4a9fe8" /><path d="M18 20c3 1 5 2 8 0l-2 8c-3 2-5 1-8 0z" fill="#ffd23e" />
  </svg>
);
const Explorer = () => (
  <svg width="34" height="32" viewBox="0 0 34 32" aria-hidden="true">
    <path d="M2 4l2-3h8l2 3h8l2 2h7v20H2z" fill="#e8cf7c" stroke="#c8a850" /><path d="M5 2h6v3H5z" fill="#2ca84a" /><path d="M14 5h7v3h-7z" fill="#d8472c" /><path d="M21 6h7v3h-7z" fill="#3f8fd8" />
    <path d="M2 9h30v18H2z" fill="#f6e6a6" /><path d="M7 31V20c0-2 1-3 3-3h14c2 0 3 1 3 3v11h-5v-8H12v8z" fill="#8cc8ea" stroke="#4f9cc8" />
  </svg>
);
const Internet = () => (
  <svg width="34" height="34" viewBox="0 0 34 34" fill="none" aria-hidden="true">
    <path d="M28 23a10.500 10.500 0 1 1 1-5H11" stroke="#42b4ee" strokeWidth="5" /><path d="M4 31C-3 23 18-2 29 3c3 2 2 5 0 8" stroke="#f4c21c" strokeWidth="3" />
  </svg>
);
const Player = () => (
  <svg width="26" height="26" viewBox="0 0 26 26" aria-hidden="true"><path d="M5 1h20v21l-4 3H1V2z" fill="#8cc4e4" stroke="#5a98c0" /><path d="M21 3v20" stroke="#5a98c0" /><circle cx="11" cy="13" r="8" fill="#f47a1c" /><path d="M8 8l8 5-8 5z" fill="#fff" /></svg>
);
const Office = ({ tone, letter, mail }: { tone: string; letter: string; mail?: boolean }) => (
  <svg width="30" height="30" viewBox="0 0 30 30" aria-hidden="true">
    {!mail && <path d="M15 4h14v22H15z" fill="#fff" stroke={tone} />}
    {mail ? <path d="M16 9h14v14H16zM16 9l7 7 7-7" fill="#fff" stroke={tone} strokeWidth="2" /> : <path d="M19 8h9M19 12h9M19 16h9M19 20h9M19 23h9" stroke={tone} strokeWidth="2" />}
    <path d="M0 3l18-3v30L0 27z" fill={tone} />
    <text x="9" y="20" textAnchor="middle" fontFamily={UI} fontWeight="700" fontSize="14" fill="#fff">{letter}</text>
  </svg>
);
const RevitTile = styled.span`
  width: 32px;
  height: 32px;
  display: flex;
  align-items: center;
  justify-content: center;
  background: linear-gradient(135deg, #c4d8f2, #eef4fc);
`;

export default function App() {
  return (
    <Screen>
      <Global />
      <Desktop>
        <TitleBar>
          <TitleRow>
            <Tool $w={22} aria-label="Application menu"><RLogo w={17} h={19} /></Tool>
            <Tool $w={30} aria-label="Open">{Folder}</Tool>
            <Tool $w={22} aria-label="Save">{Save}</Tool>
            <Tool $w={23} aria-label="Synchronize">{Sync}</Tool>
            <Tool $w={13} aria-label="Synchronize options"><Caret /></Tool>
            <Tool $w={24} aria-label="Undo">{Undo}</Tool>
            <Tool $w={12} aria-label="Undo list"><Caret c="#777" /></Tool>
            <Tool $w={22} aria-label="Redo">{Redo}</Tool>
            <Tool $w={14} aria-label="Redo list"><Caret c="#777" /></Tool>
            <Tool $w={24} aria-label="Print">{Print}</Tool>
            <Split $w={7} />
            <Tool $w={24} aria-label="Measure">{MeasureS}</Tool>
            <Tool $w={12} aria-label="Measure options"><Caret /></Tool>
            <Tool $w={23} aria-label="Aligned dimension">{DimS}</Tool>
            <Tool $w={25} aria-label="Tag">{TagS}</Tool>
            <Tool $w={22} aria-label="Text">{TextA}</Tool>
            <Split $w={10} />
            <Tool $w={22} aria-label="3D view">{Home}</Tool>
            <Tool $w={12} aria-label="3D view options"><Caret /></Tool>
            <Tool $w={24} aria-label="Section">{Section}</Tool>
            <Tool $w={24} aria-label="Thin lines">{Thin}</Tool>
            <Split $w={8} />
            <Tool $w={24} aria-label="Close hidden windows">{Hidden}</Tool>
            <Tool $w={22} aria-label="Switch windows">{Switch}</Tool>
            <Tool $w={12} aria-label="Switch windows list"><Caret /></Tool>
            <Tool $w={18} aria-label="Customize">{Custom}</Tool>
            <TitleText><span>Autodesk Revit 2018.1 -</span><span>Adlington_Kitchen_Cabinet_Door_705 - Elevation: Front</span></TitleText>
            <Tool $w={10} aria-label="Toggle search"><Ic w={4} h={8} s="none" f="#444"><path d="M0 0v8l4-4z" /></Ic></Tool>
            <Search aria-label="Search help" placeholder="Type a keyword or phrase" />
            <Tool $w={23} aria-label="Search">{Bino}</Tool>
            <Tool $w={20} aria-label="Communication center">{Dish}</Tool>
            <Tool $w={28} aria-label="Favorites">{Star}</Tool>
            <Tool $w={22} aria-label="Sign in">{User}</Tool>
            <Account>K.Marsh@gla...</Account>
            <Tool $w={20} aria-label="Account options"><Caret /></Tool>
            <Tool $w={23} aria-label="App store">{Cart}</Tool>
            <Split $w={12} />
            <Tool $w={24} aria-label="Help">{HelpI}</Tool>
            <Tool $w={12} aria-label="Help options"><Caret /></Tool>
            <WindowButtons>
              <Tool $w={24} aria-label="Minimize"><Ic w={9} h={16} s="#222" sw={3}><path d="M0 14h9" /></Ic></Tool>
              <Tool $w={26} aria-label="Restore"><Ic w={13} h={14} s="#222"><path d="M3 5V2h9v6h-2M1 6h8v6H1z" strokeWidth="1.5" /></Ic></Tool>
              <Tool $w={24} aria-label="Close"><Ic w={12} h={12} s="#222" sw={2}><path d="M1 1l10 10M11 1L1 11" /></Ic></Tool>
            </WindowButtons>
          </TitleRow>
        </TitleBar>

        <Tabs>
          <Tab $kind="file">File</Tab>
          {["Create", "Insert", "Annotate", "View", "Manage", "Add-Ins", "Quantification", "Site Designer", "Extensions"].map((t) => <Tab key={t}>{t}</Tab>)}
          <Tab $kind="active">Modify | Dimensions</Tab>
          <Tool $w={62} aria-label="Ribbon display"><Ic w={24} h={10} s="#334" f="#eef"><rect x=".5" y=".5" width="13" height="9" rx="2" /><path d="M4 6h6L7 3z" fill="#333" stroke="none" /><path d="M19 4h5l-2.500 3z" fill="#222" stroke="none" /></Ic></Tool>
        </Tabs>

        <Ribbon>
          <PanelBox $w={55}>
            <PanelBody><BigTool><BigIcon>{Cursor}</BigIcon><BigLabel>Modify</BigLabel></BigTool></PanelBody>
            <PanelTitle>Select <Caret c="#333" w={8} /></PanelTitle>
          </PanelBox>
          <PanelBox $w={83}>
            <PanelBody>
              <CellGrid $cols="36px 32px" $rows="32px 32px" $gap="4px 4px">
                <Cell aria-label="Type properties">{TypeProps}</Cell><Cell aria-label="Family category">{FamCat}</Cell>
                <Cell $on aria-label="Properties">{PropsOn}</Cell><Cell aria-label="Family types">{FamTypes}</Cell>
              </CellGrid>
            </PanelBody>
            <PanelTitle>Properties</PanelTitle>
          </PanelBox>
          <PanelBox $w={80}>
            <PanelBody $left={13}>
              <Line $gap={16}>
                <BigTool><BigIcon>{Paste}</BigIcon><BigLabel>Paste</BigLabel><Caret c="#888" /></BigTool>
                <CellGrid $cols="18px" $rows="24px 24px 24px">
                  <Cell aria-label="Cut">{Scissors}</Cell><Cell aria-label="Copy">{CopyS}</Cell><Cell aria-label="Match type">{Match}</Cell>
                </CellGrid>
              </Line>
            </PanelBody>
            <PanelTitle>Clipboard</PanelTitle>
          </PanelBox>
          <PanelBox $w={108}>
            <PanelBody $left={7}>
              <CellGrid $cols="64px 32px" $rows="24px 24px">
                <Cell $start>{CutG}Cut <Caret c="#777" /></Cell><Cell $start aria-label="Cope">{Cope}</Cell>
                <Cell $start>{JoinG}Join <Caret c="#777" /></Cell><Cell $start aria-label="Wall joins">{Wall}<Caret c="#777" /></Cell>
              </CellGrid>
            </PanelBody>
            <PanelTitle>Geometry</PanelTitle>
          </PanelBox>
          <PanelBox $w={238}>
            <PanelBody>
              <CellGrid $cols="repeat(4, 39px)" $rows="36px 36px">
                <Cell aria-label="Align">{AlignI}</Cell><Cell aria-label="Offset">{OffsetI}</Cell><Cell aria-label="Mirror pick axis">{MirrorI}</Cell><Cell aria-label="Mirror draw axis">{MirrorD}</Cell>
                <Cell aria-label="Move">{MoveI}</Cell><Cell aria-label="Copy elements">{CopyI}</Cell><Cell aria-label="Rotate">{RotateI}</Cell><Cell aria-label="Trim">{TrimI}</Cell>
              </CellGrid>
              <CellGrid $cols="repeat(3, 25px)" $rows="24px 24px 24px">
                <Cell aria-label="Split">{SplitI}</Cell><Cell aria-label="Split with gap">{GapI}</Cell><Cell aria-label="Unpin">{PinX}</Cell>
                <Cell aria-label="Array">{Array4}</Cell><Cell aria-label="Scale">{ScaleI}</Cell><Cell aria-label="Pin">{PinI}</Cell>
                <Cell aria-label="Extend single">{ExtendI}</Cell><Cell aria-label="Extend multiple">{ExtendM}</Cell><Cell aria-label="Delete">{DeleteI}</Cell>
              </CellGrid>
            </PanelBody>
            <PanelTitle>Modify</PanelTitle>
          </PanelBox>
          <PanelBox $w={56}>
            <PanelBody>
              <CellGrid $cols="44px" $rows="36px 36px">
                <Cell aria-label="Measure distance">{MeasureI}<Caret c="#777" /></Cell><Cell aria-label="Angular dimension">{AngleI}<Caret c="#777" /></Cell>
              </CellGrid>
            </PanelBody>
            <PanelTitle>Measure</PanelTitle>
          </PanelBox>
          <PanelBox $w={44} $after={4}>
            <PanelBody>
              <CellGrid $cols="36px" $rows="36px 36px">
                <Cell aria-label="Create group">{CreateG}</Cell><Cell aria-label="Create similar">{CreateS}</Cell>
              </CellGrid>
            </PanelBody>
            <PanelTitle>Create</PanelTitle>
          </PanelBox>
          <PanelBox $w={230}>
            <PanelBody>
              <LabelForm>
                <label htmlFor="dimlabel">Label:</label>
                <Line $gap={6}>
                  <SelectWrap $w={200} $h={20} $tone="#eee" $edge="#c8c8c8">
                    <select id="dimlabel" defaultValue="h"><option value="h">Height = 705</option></select>
                    <Caret c="#333" w={8} />
                  </SelectWrap>
                  <Cell aria-label="Create parameter">{FamParam}</Cell>
                </Line>
                <Line $top={5} $gap={4}><span /><Tick type="checkbox" id="inst" /><label htmlFor="inst">Instance Parameter</label></Line>
              </LabelForm>
            </PanelBody>
            <PanelTitle $tone="#e5f0d7">Label Dimension</PanelTitle>
          </PanelBox>
          <PanelBox $w={82}>
            <PanelBody><BigTool><BigIcon>{Witness}</BigIcon><BigLabel>Edit<br />Witness Lines</BigLabel></BigTool></PanelBody>
            <PanelTitle $tone="#e5f0d7">Witness Lines</PanelTitle>
          </PanelBox>
          <PanelBox $w={79}>
            <PanelBody />
            <PanelTitle $tone="#c8c8e4">Family Editor</PanelTitle>
          </PanelBox>
        </Ribbon>

        <Options>
          <Context>Modify | Dimensions</Context>
          <Rule $after={8} />
          <Line $gap={4}><Tick type="checkbox" id="leader" /><FieldLabel htmlFor="leader" $w={50} $tone="#6f7569">Leader</FieldLabel></Line>
          <FieldLabel htmlFor="prefer" $w={36} $tone="#a0a49a">Prefer:</FieldLabel>
          <SelectWrap $w={108} $h={22} $tone="#f0f0f0" $edge="#c8c8cc" $ink="#6e6e6e">
            <select id="prefer" defaultValue="w"><option value="w">Wall centerlines</option></select>
            <Caret c="#aaa" w={8} />
          </SelectWrap>
          <Rule $before={10} $after={9} />
          <FlatButton $w={121} $h={21}>Related Dimensions</FlatButton>
        </Options>

        <Work>
          <Side>
            <PaneHead>Properties <button aria-label="Close properties"><Close /></button></PaneHead>
            <PaneBody>
              <TypeBox>
                <Preview />
                <span>Linear Dimension Style<br />Linear</span>
                <Grow />
                <Caret c="#999" w={8} />
              </TypeBox>
              <FilterRow>
                <SelectWrap $w={315} $h={23} $tone="#f4f4f4" $edge="#a8acb0">
                  <select aria-label="Filter" defaultValue="d"><option value="d">Dimensions (1)</option></select>
                  <Caret c="#999" w={8} />
                </SelectWrap>
                <EditType>{EditTypeI}Edit Type</EditType>
              </FilterRow>
              <Props>
                <colgroup><col width="193" /><col width="193" /><col width="12" /></colgroup>
                <tbody>
                  <Group><th colSpan={2}>Graphics</th><td>{Fold}</td></Group>
                  <Prop><th scope="row">Leader</th><td><Tick type="checkbox" aria-label="Leader" /></td><td /></Prop>
                  <Prop $dim><th scope="row">Baseline Offset</th><td>0.0000 mm</td><td /></Prop>
                  <Group><th colSpan={2}>Text</th><td>{Fold}</td></Group>
                  <Prop $dim><th scope="row">Value</th><td>800.0</td><td /></Prop>
                  <Group><th colSpan={2}>Other</th><td>{Fold}</td></Group>
                  <Prop><th scope="row">Label</th><td>Height</td><td /></Prop>
                </tbody>
              </Props>
              <SideFoot><a href="#help">Properties help</a><FlatButton $w={73} $h={21}>Apply</FlatButton></SideFoot>
            </PaneBody>
          </Side>

          <View>
            <ViewRow>
              <Sheet>
                <Drawing />
                <WindowTools>
                  <button aria-label="Minimize view"><Ic w={12} h={12} s="#555" f="#fff"><path d="M.5 7.5h11v3H.5z" /></Ic></button>
                  <button aria-label="Restore view"><Ic w={12} h={12} s="#444" f="#fff"><path d="M3 .5h8.5V9M.5 3.5h8v8h-8zM3.5 5.5h3v3h-3z" /></Ic></button>
                  <button aria-label="Close view"><Ic w={12} h={12} s="#444" f="#fff"><path d="M1 1h3l2 3 2-3h3L8 6l3 5H8L6 8l-2 3H1l3-5z" /></Ic></button>
                </WindowTools>
                <NavBar><Navigator /></NavBar>
              </Sheet>
              <VScroll><Caret c="#333" w={7} up /><i /></VScroll>
            </ViewRow>
            <ViewBar>
              <Scale>1 : 10</Scale>
              <ViewIcons>{viewIcons}</ViewIcons>
              <Ic w={5} h={8} s="none" f="#222"><path d="M4 0v8L0 4z" /></Ic>
              <HTrack><i /></HTrack>
            </ViewBar>
          </View>

          <Browser>
            <PaneHead $left={4}>Project Browser - Adlington_Kitchen_Cabinet_Doo... <button aria-label="Close browser"><Close /></button></PaneHead>
            <Tree>
              {items.map((it) => (
                <Node key={it.text} $bold={it.bold} $on={it.on}><Branch it={it} /><span>{it.text}</span></Node>
              ))}
            </Tree>
          </Browser>
        </Work>

        <Status>Click to select, TAB for alternates, CTRL adds, SHIFT unselects.</Status>

        <Taskbar>
          <Task $w={48} $after={9} aria-label="Start"><Orb /></Task>
          <Task $w={50} $after={0} $look="open" aria-label="Internet Explorer"><Internet /></Task>
          <Stack /><Stack />
          <Task $w={58} $after={4} $look="open" aria-label="Explorer"><Explorer /></Task>
          <Task $w={58} $after={4} aria-label="Media Player"><Player /></Task>
          <Task $w={58} $after={4} aria-label="Excel"><Office tone="#1f7244" letter="X" /></Task>
          <Task $w={58} $after={4} aria-label="Word"><Office tone="#2a5699" letter="W" /></Task>
          <Task $w={58} $after={4} $look="open" aria-label="Outlook"><Office tone="#0072c6" letter="O" mail /></Task>
          <Task $w={58} $after={0} $look="front" aria-label="Revit"><RevitTile><RLogo w={22} h={28} /></RevitTile></Task>
          <Tray>
            <TrayCell aria-label="Show hidden icons"><Caret c="#ddd" w={8} up /></TrayCell>
            <TrayCell aria-label="Action center"><Ic w={17} h={16} s="none" f="#fff"><path d="M1 1h2v14H1zM3 2h8v7H3z" /><path d="M11 5l6 10H5z" fill="#f4c81c" /><path d="M10.500 8h1.500v4h-1.500zM10.500 13h1.500v1h-1.500z" fill="#222" /></Ic></TrayCell>
            <TrayCell aria-label="Dropbox"><Ic w={16} h={16} s="none" f="#fff"><path d="M4 0l4 3-4 3-4-3zM12 0l4 3-4 3-4-3zM4 6l4 3-4 3-4-3zM4 12l4-3 4 3-4 3z" /><circle cx="11" cy="11" r="4.5" fill="#2ea84a" /><path d="M9 11l2 2 3-4" stroke="#fff" fill="none" strokeWidth="1.5" /></Ic></TrayCell>
            <TrayCell aria-label="Network"><Ic w={15} h={16} s="#fff" f="#222"><path d="M4 4.500h10v8H4zM6 15h7M9 12v3" /><path d="M1 0v4h4V0M3 4v9h3" fill="none" /></Ic></TrayCell>
            <TrayCell aria-label="Volume"><Ic w={15} h={14} s="#fff" f="#fff"><path d="M1 5h3l3-3v10L4 9H1z" /><path d="M9 5c1 1 1 3 0 4M11 3c2 2 2 6 0 8" fill="none" /></Ic></TrayCell>
            <Clock>14:37<br />18/10/2017</Clock>
            <Peek aria-label="Show desktop" />
          </Tray>
        </Taskbar>

        <Dialog role="dialog" aria-label="Autodesk Revit 2018">
          <DialogTitle>Autodesk Revit 2018</DialogTitle>
          <DialogBody>
            <Box>
              <legend>Error - cannot be ignored</legend>
              <MessageRow>
                <textarea aria-label="Error message" readOnly value="Constraints are not satisfied" />
                <MessageScroll><Caret c="#888" w={7} up /><Caret c="#888" w={7} /></MessageScroll>
              </MessageRow>
              <Buttons $top={8}>
                <Push $w={79}><u>S</u>how</Push>
                <Push $w={73} disabled>More <u>I</u>nfo</Push>
                <Push $w={91}><u>E</u>xpand &gt;&gt;</Push>
              </Buttons>
            </Box>
            <Buttons>
              <Push $w={163}>Remove Constraints</Push>
              <Grow />
              <Push $w={88} $tall disabled><u>O</u>K</Push>
              <Push $w={88} $tall $focus><u>C</u>ancel</Push>
            </Buttons>
          </DialogBody>
        </Dialog>
      </Desktop>
      <Edge />
    </Screen>
  );
}
